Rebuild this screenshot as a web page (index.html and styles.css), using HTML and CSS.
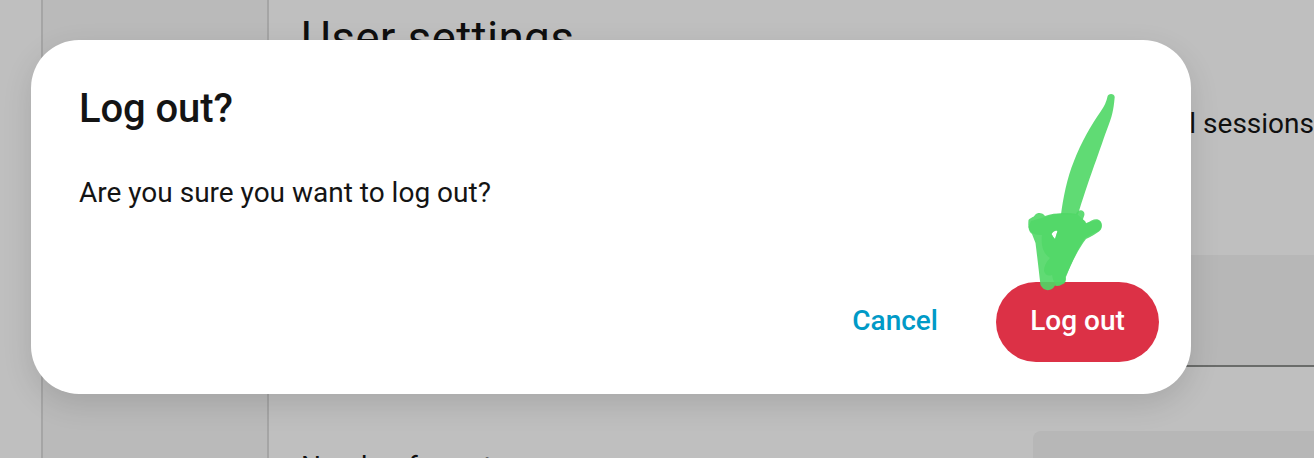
FILE: index.html
```html
<!DOCTYPE html>
<html lang="en">
<head>
    <meta charset="UTF-8">
    <meta name="viewport" content="width=device-width, initial-scale=1.0">
    <title>User settings</title>
    <link rel="stylesheet" href="styles.css">
</head>
<body>

<div class="app">
    <div class="gutter"></div>
    <aside class="sidebar"></aside>
    <main class="settings">
        <h1>User settings</h1>
        <p class="description">all sessions</p>
        <div class="field"></div>
        <div class="setting-row">
            <label>Number format</label>
            <div class="select"></div>
        </div>
    </main>
</div>

<div class="scrim">
    <div class="dialog" role="alertdialog">
        <h2>Log out?</h2>
        <p>Are you sure you want to log out?</p>
        <div class="actions">
            <button class="cancel">Cancel</button>
            <button class="logout">Log out</button>
        </div>
    </div>
</div>

<svg class="arrow" viewBox="1020 85 100 215" width="100" height="215">
    <path d="M1107.500 96.500C1108 93 1114.500 93 1114.700 97C1114 105 1113 114 1109 124C1104 137 1100 150 1094 166C1088 183 1082 201 1078 214.500L1061 214.500C1063 199 1067 178 1074 161C1081 143 1091 125 1101 111Q1106 104 1107.500 96.500Z"/>
    <path fill-rule="evenodd" d="M1028.500 220C1031 217 1033 218 1035 215C1038 211.500 1043 213 1045 216C1054 212.500 1066 213 1076 214C1078 209 1084 209 1084.500 214C1084.500 216 1083 218 1083 219.500Q1086 221 1086 223.500C1091 221 1094 218.500 1098 219.500C1103 221 1103 229 1099 231.500C1095 234 1091 237 1086 239C1078 249 1071 265 1065.500 277Q1067 283 1062 284.500Q1058 287 1055 285.500C1052 291.500 1044 292 1040.500 285C1039 272 1037 255 1035.500 243L1032 234C1028 231 1028 226 1028.500 220ZM1053 232Q1056 229.500 1057.500 231L1055 239Q1053 237 1051.500 234Z"/>
    <path class="overlap" d="M1031 221L1045 217C1058 212.500 1067 213 1077 214Q1083 219 1086 223L1098 220C1104 223 1102 231 1096 232L1085 238C1078 248 1071 264 1066 277Q1066 284 1058 285Q1054 286 1052 275Q1046 277 1044 271Q1044 264 1050 258Q1040 252 1042 235Q1031 236 1028.500 227ZM1053 232L1051.500 234Q1053 237 1055 239L1057.500 231Q1056 229.500 1053 232Z"/>
</svg>

</body>
</html>
```
FILE: styles.css
```css
body {
    font-family: Roboto, Arial, sans-serif;
    font-size: 28px;
    line-height: 40px;
    color: #141414;
    background-color: #fff;
    margin: 0;
    overflow: hidden;
}
h1, h2, p {
    margin: 0;
}
.app {
    display: flex;
    height: 458px;
    overflow: hidden;
}
.gutter {
    width: 41px;
    flex: none;
}
.sidebar {
    width: 224px;
    flex: none;
    background-color: #f8f8f8;
    border-left: 2px solid #dcdcdc;
    border-right: 2px solid #dcdcdc;
}
.settings {
    flex: 1;
    padding: 12px 0 0 32px;
}
h1 {
    font-size: 46px;
    font-weight: 400;
    line-height: 52px;
    letter-spacing: 0.3px;
}
.description {
    margin-top: 40px;
    text-align: right;
    white-space: nowrap;
}
.field {
    height: 110px;
    margin: 111px 0 0 732px;
    background-color: #f4f4f4;
    border-bottom: 2px solid #8e918e;
}
.setting-row {
    display: flex;
    margin-top: 64px;
}
.setting-row label {
    width: 732px;
    padding-top: 16px;
}
.select {
    flex: 1;
    height: 110px;
    background-color: #f4f4f4;
    border-radius: 8px 0 0 0;
}
.scrim {
    position: absolute;
    inset: 0;
    box-sizing: border-box;
    padding: 40px 123px 64px 31px;
    background-color: rgba(0, 0, 0, 0.25);
}
.dialog {
    display: flex;
    flex-direction: column;
    box-sizing: border-box;
    height: 354px;
    padding: 45px 32px 32px 48px;
    background-color: #fff;
    border-radius: 48px;
    box-shadow: 0 10px 30px rgba(0, 0, 0, 0.12);
}
.dialog h2 {
    font-size: 40px;
    font-weight: 500;
    line-height: 48px;
    letter-spacing: -0.1px;
}
.dialog p {
    margin-top: 40px;
}
.actions {
    display: flex;
    justify-content: flex-end;
    gap: 24px;
    margin-top: auto;
}
button {
    height: 80px;
    padding: 0 34px 4px;
    border: none;
    border-radius: 40px;
    font-family: inherit;
    font-size: 28px;
    font-weight: 500;
    background-color: transparent;
    cursor: pointer;
}
.cancel {
    color: #009ac7;
}
.logout {
    width: 163px;
    color: #fff;
    background-color: #dc3146;
}
.arrow {
    position: absolute;
    left: 1020px;
    top: 85px;
    fill: #4fd765;
    fill-opacity: 0.9;
}
.arrow .overlap {
    fill-rule: evenodd;
    fill-opacity: 0.75;
}
```
